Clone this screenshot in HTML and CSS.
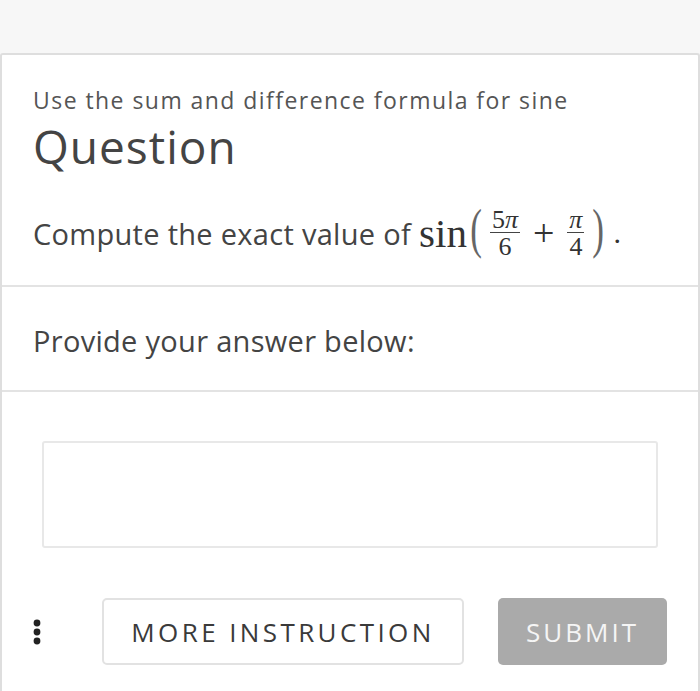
FILE: index.html
```html
<!DOCTYPE html>
<html lang="en">
<head>
    <meta charset="UTF-8">
    <meta name="viewport" content="width=device-width, initial-scale=1.0">
    <title>Question</title>
    <link rel="stylesheet" href="styles.css">
</head>
<body>
    <div class="topbar"></div>
    <div class="card">
        <div class="section intro">
            <p class="topic">Use the sum and difference formula for sine</p>
            <h1 class="heading">Question</h1>
            <p class="prompt">
                Compute the exact value of
                <span class="math">
                    <span class="fn">sin</span><span class="paren">(</span>
                    <span class="frac"><span class="num">5<i>π</i></span><span class="den">6</span></span>
                    <span class="op">+</span>
                    <span class="frac"><span class="num"><i>π</i></span><span class="den">4</span></span><span class="paren">)</span><span class="dot">.</span>
                </span>
            </p>
        </div>
        <div class="section">
            <p class="label">Provide your answer below:</p>
        </div>
        <div class="section answer">
            <div class="answer-box"></div>
            <div class="actions">
                <svg class="more" width="10" height="28" viewBox="0 0 10 28">
                    <circle cx="5" cy="5" r="3.4" fill="#222"/>
                    <circle cx="5" cy="14" r="3.4" fill="#222"/>
                    <circle cx="5" cy="23" r="3.4" fill="#222"/>
                </svg>
                <button class="btn btn-outline">MORE INSTRUCTION</button>
                <button class="btn btn-submit">SUBMIT</button>
            </div>
        </div>
    </div>
</body>
</html>
```

FILE: styles.css
```css
body {
    margin: 0;
    background-color: #f7f7f7;
    font-family: "Open Sans", "Noto Sans", sans-serif;
    color: #444;
}

.topbar {
    height: 53px;
}

.card {
    background-color: #fff;
    border: 2px solid #dedede;
    border-bottom: none;
    border-radius: 3px 3px 0 0;
    width: 696px;
    height: 636px;
}

.section {
    border-bottom: 2px solid #e3e3e3;
    padding: 0 31px;
}

.intro {
    padding-top: 30px;
    padding-bottom: 27px;
}

.topic {
    margin: 0;
    font-size: 23px;
    line-height: 30px;
    letter-spacing: 1.45px;
    color: #555;
}

.heading {
    margin: 2px 0 0;
    font-size: 46px;
    line-height: 58px;
    font-weight: normal;
    letter-spacing: 1px;
    color: #444;
}

.prompt {
    margin: 33px 0 0;
    height: 50px;
    font-size: 29px;
    letter-spacing: 0.3px;
    color: #444;
    display: flex;
    align-items: center;
    gap: 8px;
}

.math {
    display: inline-flex;
    align-items: center;
    font-family: "Liberation Serif", "DejaVu Serif", serif;
    color: #333;
    letter-spacing: 0;
}

.fn {
    font-size: 41px;
}

.paren {
    font-size: 54px;
    line-height: 54px;
    transform: scaleX(0.65);
    color: #666;
    margin-top: -8px;
}

.frac {
    display: inline-flex;
    flex-direction: column;
    align-items: center;
    font-size: 26px;
    line-height: 23px;
    margin: 0 5px;
}

.num {
    border-bottom: 1px solid #444;
    padding: 0 2px 1px;
}

.frac i {
    font-style: italic;
}

.den {
    padding-top: 2px;
}

.op {
    font-size: 38px;
    margin: 0 8px;
}

.dot {
    font-size: 30px;
    margin-left: 6px;
}

.label {
    margin: 0;
    padding: 34px 0 29px;
    font-size: 29px;
    line-height: 40px;
    letter-spacing: 0.3px;
    color: #444;
}

.answer {
    border-bottom: none;
    padding-top: 49px;
}

.answer-box {
    margin-left: 9px;
    width: 612px;
    height: 103px;
    border: 2px solid #e8e8e8;
    border-radius: 3px;
}

.actions {
    display: flex;
    align-items: center;
    margin-top: 50px;
}

.more {
    margin-left: -1px;
}

.btn {
    font-family: "Open Sans", "Noto Sans", sans-serif;
    font-size: 26px;
    letter-spacing: 3.4px;
    height: 67px;
    border-radius: 5px;
    cursor: pointer;
}

.btn-outline {
    margin-left: 60px;
    width: 362px;
    background-color: #fff;
    border: 2px solid #e2e2e2;
    color: #3a3a3a;
}

.btn-submit {
    margin-left: 34px;
    width: 169px;
    background-color: #aaa;
    border: none;
    color: #f5f5f5;
    letter-spacing: 3px;
}
```
